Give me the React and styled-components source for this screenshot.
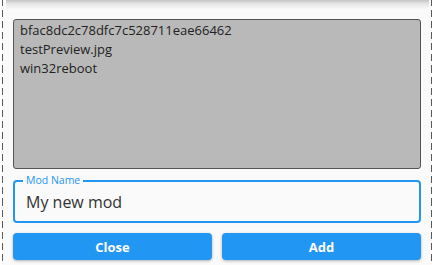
import React from "react";
import styled, { createGlobalStyle } from "styled-components";

const Global = createGlobalStyle`
  html, body { margin: 0; padding: 0; background: #ffffff; }
  body { font-family: "Open Sans", "Noto Sans", sans-serif; }
`;

const Frame = styled.div`
  width: 435px;
  height: 265px;
  box-sizing: border-box;
  padding-left: 2px;
  overflow: hidden;
`;

const Panel = styled.div`
  width: 430px;
  height: 265px;
  box-sizing: border-box;
  border-style: solid;
  border-width: 0 1px;
  border-image: repeating-linear-gradient(to bottom, #5a5a5a 0 7px, transparent 7px 11px) 1;
  background: #fafafa;
  display: flex;
  flex-direction: column;
`;

const TopShade = styled.div`
  height: 9px;
  margin: 0 2px 0 3px;
  background: linear-gradient(#c4c4c4, #e4e4e4 40%, #f8f8f8);
  flex: none;
`;

const Body = styled.div`
  flex: 1;
  display: flex;
  flex-direction: column;
  padding: 10px 10px 0 10px;
`;

const FileList = styled.div`
  height: 150px;
  box-sizing: border-box;
  background: #b9b9b9;
  border: 1px solid #555;
  border-radius: 3px;
  padding: 1px 6px;
  font-size: 13px;
  line-height: 19px;
  color: #222;
`;

const FileLine = styled.div`
  white-space: nowrap;
`;

const Field = styled.div`
  margin-top: 11px;
  height: 43px;
  box-sizing: border-box;
  border: 2px solid #2196f3;
  border-radius: 4px;
  padding: 0 11px;
  position: relative;
  display: flex;
  align-items: center;
`;

const Label = styled.span`
  position: absolute;
  top: -8px;
  left: 8px;
  font-size: 10.5px;
  line-height: 12px;
  color: #2196f3;
  padding: 0 3px;
  background: #fafafa;
`;

const Input = styled.div`
  font-size: 16px;
  color: #333;
  line-height: 20px;
  margin-top: 1px;
`;

const Buttons = styled.div`
  display: grid;
  grid-template-columns: 1fr 1fr;
  gap: 10px;
  margin-top: 10px;
`;

const Button = styled.button`
  height: 27px;
  border: none;
  border-radius: 4px;
  background: #2196f3;
  color: #fff;
  font-family: "Open Sans", "Noto Sans", sans-serif;
  font-weight: 700;
  font-size: 13px;
  box-shadow: 0 1px 3px rgba(0,0,0,0.3);
  padding: 0;
`;

export default function App() {
  return (
    <Frame>
      <Global />
      <Panel>
        <TopShade />
        <Body>
          <FileList>
            <FileLine>bfac8dc2c78dfc7c528711eae66462</FileLine>
            <FileLine>testPreview.jpg</FileLine>
            <FileLine>win32reboot</FileLine>
          </FileList>
          <Field>
            <Label>Mod Name</Label>
            <Input>My new mod</Input>
          </Field>
          <Buttons>
            <Button>Close</Button>
            <Button>Add</Button>
          </Buttons>
        </Body>
      </Panel>
    </Frame>
  );
}
